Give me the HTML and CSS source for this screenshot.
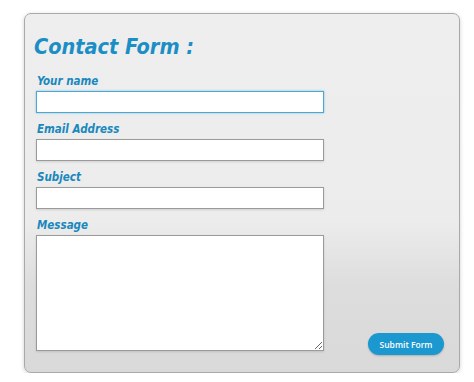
FILE: index.html
```html
<!DOCTYPE html>
<html lang="en">
<head>
<meta charset="utf-8">
<title>Contact Form</title>
<link rel="stylesheet" href="styles.css">
</head>
<body>
<div class="panel">
  <h1 class="title">Contact Form :</h1>
  <form class="form">
    <div class="fields">
      <label class="label" for="name">Your name</label>
      <input class="field field-focus" id="name" type="text" autofocus>
      <label class="label" for="email">Email Address</label>
      <input class="field" id="email" type="text">
      <label class="label" for="subject">Subject</label>
      <input class="field" id="subject" type="text">
      <label class="label" for="message">Message</label>
      <textarea class="field area" id="message"></textarea>
    </div>
    <button class="submit" type="button">Submit Form</button>
  </form>
</div>
</body>
</html>
```

FILE: styles.css
```css
html, body {
  margin: 0;
  padding: 0;
  background: #ffffff;
}

.panel {
  box-sizing: border-box;
  margin: 13px 0 0 24px;
  width: 436px;
  height: 360px;
  border: 1px solid #a9a9a9;
  border-radius: 7px;
  box-shadow: 0 1px 4px rgba(0, 0, 0, 0.18);
  background: linear-gradient(to bottom, #eeeeee 0%, #ececec 58%, #dddddd 76%, #d9d9d9 100%);
  padding: 20px 15px 0 11px;
  display: flex;
  flex-direction: column;
}

.title {
  margin: 0 0 0 -2px;
  font-family: "DejaVu Sans Condensed", "DejaVu Sans", sans-serif;
  font-style: italic;
  font-weight: bold;
  font-size: 21.5px;
  line-height: 26px;
  color: #1b8ec6;
}

.form {
  flex: 1;
  display: flex;
  align-items: flex-start;
  margin-top: 14px;
}

.fields {
  display: flex;
  flex-direction: column;
  width: 288px;
}

.label {
  font-family: "DejaVu Sans Condensed", "DejaVu Sans", sans-serif;
  font-style: italic;
  font-weight: bold;
  font-size: 11.5px;
  line-height: 14px;
  color: #1a88bd;
  margin: 0 0 3px 1px;
}

.field {
  box-sizing: border-box;
  display: block;
  width: 288px;
  height: 22px;
  margin: 0 0 9px 0;
  padding: 2px 4px;
  border: 1px solid #9a9a9a;
  background: #ffffff;
  box-shadow: 0 1px 2px rgba(0, 0, 0, 0.12);
  font-family: "DejaVu Sans", sans-serif;
  font-size: 12px;
  outline: none;
}

.field-focus {
  border-color: #4aa8d4;
  box-shadow: 0 0 2px rgba(60, 160, 210, 0.6);
}

.area {
  height: 116px;
  margin-bottom: 0;
  resize: both;
}

.submit {
  align-self: flex-end;
  margin: 0 0 17px auto;
  width: 76px;
  height: 22px;
  border: none;
  border-radius: 11px;
  background: #1a98cf;
  box-shadow: 0 1px 2px rgba(0, 0, 0, 0.2);
  color: #ffffff;
  font-family: "Open Sans", sans-serif;
  font-weight: 600;
  font-size: 8.5px;
  padding: 0;
}
```
